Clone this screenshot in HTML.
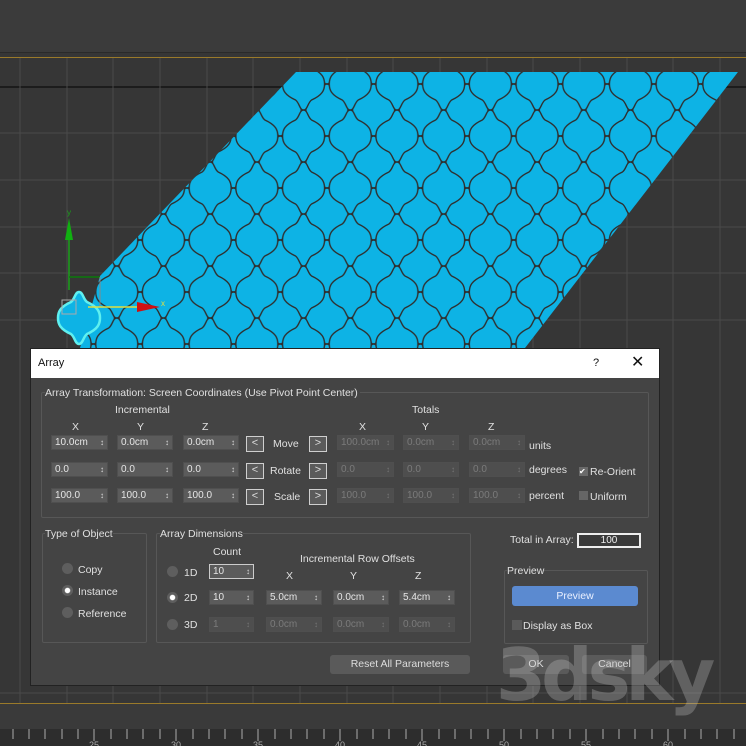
<!DOCTYPE html><html><head><style>
*{margin:0;padding:0;box-sizing:border-box}
body{width:746px;height:746px;overflow:hidden;background:#363636;font-family:"Liberation Sans",sans-serif;position:relative;color:#ddd;font-size:10.5px}
.a{position:absolute}
.sp{position:absolute;height:15px;background:#5b5b5b;border:1px solid #4f4f4f;color:#e6e6e6;font-size:10px;line-height:13px;padding-left:3px}
.sp:after{content:"\2195";position:absolute;right:3px;top:0;font-size:8px;color:#ddd}
.sp.d{background:#4e4e4e;color:#7b7b7b}
.sp.d:after{color:#777}
.bt{position:absolute;width:18px;height:16px;border:1px solid #cfcfcf;background:#5b5b5b;color:#ddd;text-align:center;font-size:11px;line-height:13px}
.grp{position:absolute;border:1px solid #575757;border-radius:2px}
.lbl{position:absolute;font-size:10.5px;color:#e0e0e0;white-space:nowrap}
.rad{position:absolute;width:11px;height:11px;border-radius:50%;background:#5e5e5e}
.pb{position:absolute;background:#5a5a5a;border-radius:3px;text-align:center;color:#ddd;font-size:10.5px}
</style></head><body>
<div class="a" style="left:0;top:0;width:746px;height:52px;background:#3b3b3b"></div>
<div class="a" style="left:0;top:52px;width:746px;height:1px;background:#2a2a2a"></div>
<div class="a" style="left:0;top:57px;width:746px;height:1px;background:#9a7a2a"></div>
<div class="a" style="left:0;top:86px;width:746px;height:2px;background:#1c1c1c"></div>
<svg class="a" style="left:0;top:0" width="746" height="746">
<g stroke="#4a4a4a" stroke-width="1">
<line x1="20" y1="58" x2="20" y2="703"/><line x1="67" y1="58" x2="67" y2="703"/><line x1="113" y1="58" x2="113" y2="703"/><line x1="160" y1="58" x2="160" y2="703"/><line x1="207" y1="58" x2="207" y2="703"/><line x1="253" y1="58" x2="253" y2="703"/><line x1="300" y1="58" x2="300" y2="703"/><line x1="347" y1="58" x2="347" y2="703"/><line x1="393" y1="58" x2="393" y2="703"/><line x1="440" y1="58" x2="440" y2="703"/><line x1="487" y1="58" x2="487" y2="703"/><line x1="533" y1="58" x2="533" y2="703"/><line x1="580" y1="58" x2="580" y2="703"/><line x1="627" y1="58" x2="627" y2="703"/><line x1="673" y1="58" x2="673" y2="703"/><line x1="720" y1="58" x2="720" y2="703"/>
<line x1="0" y1="133" x2="746" y2="133"/><line x1="0" y1="180" x2="746" y2="180"/><line x1="0" y1="227" x2="746" y2="227"/><line x1="0" y1="273" x2="746" y2="273"/><line x1="0" y1="320" x2="746" y2="320"/><line x1="0" y1="693" x2="746" y2="693"/>
</g>
<defs>
<path id="t" d="M0,-26 C4,-26 4,-19 8,-16 C19,-11 21,-6 21,0 C21,6 19,11 8,16 C4,19 4,26 0,26 C-4,26 -4,19 -8,16 C-19,11 -21,6 -21,0 C-21,-6 -19,-11 -8,-16 C-4,-19 -4,-26 0,-26Z"/>
<pattern id="p" x="0" y="0" width="46.7" height="52" patternUnits="userSpaceOnUse">
<use href="#t" x="0" y="0" fill="#0db3e5" stroke="#2f2f2f" stroke-width="1.4"/>
<use href="#t" x="46.7" y="0" fill="#0db3e5" stroke="#2f2f2f" stroke-width="1.4"/>
<use href="#t" x="0" y="52" fill="#0db3e5" stroke="#2f2f2f" stroke-width="1.4"/>
<use href="#t" x="46.7" y="52" fill="#0db3e5" stroke="#2f2f2f" stroke-width="1.4"/>
<use href="#t" x="23.35" y="26" fill="#0db3e5" stroke="#2f2f2f" stroke-width="1.4"/>
</pattern>
<clipPath id="c"><polygon points="80,342 525,342 738,66 296,66 100,270"/></clipPath>
</defs>
<rect x="0" y="0" width="746" height="346" fill="url(#p)" clip-path="url(#c)" transform="translate(0,6)"/>
<use href="#t" x="79" y="318" fill="#0db3e5" stroke="#5ff0f0" stroke-width="2.5"/>
<rect x="62" y="300" width="14" height="14" fill="none" stroke="#aaa"/>
<line x1="69" y1="240" x2="69" y2="290" stroke="#1aa01a" stroke-width="1.5"/>
<polygon points="69,218 65,240 73,240" fill="#10b010"/>
<line x1="69" y1="277" x2="100" y2="277" stroke="#0a7a0a" stroke-width="1.5"/>
<line x1="100" y1="277" x2="100" y2="307" stroke="#888" stroke-width="1"/>
<line x1="88" y1="307" x2="137" y2="307" stroke="#e0e040" stroke-width="1.5"/>
<polygon points="160,307 137,302 137,312" fill="#d01010"/>
<text x="67" y="215" fill="#1aa01a" font-size="8" font-family="Liberation Sans">y</text>
<text x="161" y="306" fill="#e0e040" font-size="8" font-family="Liberation Sans">x</text>
</svg>
<!-- bottom -->
<div class="a" style="left:0;top:703px;width:746px;height:1px;background:#9a7a2a"></div>
<div class="a" style="left:0;top:704px;width:746px;height:25px;background:#3a3a3a"></div>
<div class="a" style="left:0;top:729px;width:746px;height:17px;background:#2d2d2d"></div>
<svg class="a" style="left:0;top:729px" width="746" height="17"><g stroke="#aaa">
<line x1="13" y1="0" x2="13" y2="10"/><line x1="29" y1="0" x2="29" y2="10"/><line x1="45" y1="0" x2="45" y2="10"/><line x1="62" y1="0" x2="62" y2="10"/><line x1="78" y1="0" x2="78" y2="10"/><line x1="94" y1="0" x2="94" y2="12"/><line x1="111" y1="0" x2="111" y2="10"/><line x1="127" y1="0" x2="127" y2="10"/><line x1="143" y1="0" x2="143" y2="10"/><line x1="160" y1="0" x2="160" y2="10"/><line x1="176" y1="0" x2="176" y2="12"/><line x1="193" y1="0" x2="193" y2="10"/><line x1="209" y1="0" x2="209" y2="10"/><line x1="225" y1="0" x2="225" y2="10"/><line x1="242" y1="0" x2="242" y2="10"/><line x1="258" y1="0" x2="258" y2="12"/><line x1="275" y1="0" x2="275" y2="10"/><line x1="291" y1="0" x2="291" y2="10"/><line x1="307" y1="0" x2="307" y2="10"/><line x1="324" y1="0" x2="324" y2="10"/><line x1="340" y1="0" x2="340" y2="12"/><line x1="357" y1="0" x2="357" y2="10"/><line x1="373" y1="0" x2="373" y2="10"/><line x1="389" y1="0" x2="389" y2="10"/><line x1="406" y1="0" x2="406" y2="10"/><line x1="422" y1="0" x2="422" y2="12"/><line x1="439" y1="0" x2="439" y2="10"/><line x1="455" y1="0" x2="455" y2="10"/><line x1="471" y1="0" x2="471" y2="10"/><line x1="488" y1="0" x2="488" y2="10"/><line x1="504" y1="0" x2="504" y2="12"/><line x1="521" y1="0" x2="521" y2="10"/><line x1="537" y1="0" x2="537" y2="10"/><line x1="553" y1="0" x2="553" y2="10"/><line x1="570" y1="0" x2="570" y2="10"/><line x1="586" y1="0" x2="586" y2="12"/><line x1="603" y1="0" x2="603" y2="10"/><line x1="619" y1="0" x2="619" y2="10"/><line x1="635" y1="0" x2="635" y2="10"/><line x1="652" y1="0" x2="652" y2="10"/><line x1="668" y1="0" x2="668" y2="12"/><line x1="685" y1="0" x2="685" y2="10"/><line x1="701" y1="0" x2="701" y2="10"/><line x1="717" y1="0" x2="717" y2="10"/><line x1="734" y1="0" x2="734" y2="10"/></g>
<g fill="#aaa" font-size="9" font-family="Liberation Sans"><text x="89" y="19">25</text><text x="171" y="19">30</text><text x="253" y="19">35</text><text x="335" y="19">40</text><text x="417" y="19">45</text><text x="499" y="19">50</text><text x="581" y="19">55</text><text x="663" y="19">60</text></g></svg>
<!-- dialog -->
<div class="a" style="left:30px;top:348px;width:630px;height:338px;background:#444;border:1px solid #222"></div>
<div class="a" style="left:31px;top:349px;width:628px;height:29px;background:#fff;color:#111;font-size:11px;line-height:29px;padding-left:7px">Array<span class="a" style="left:562px;top:0">?</span><span class="a" style="left:600px;top:-1px;font-size:16px">✕</span></div>
<div class="grp" style="left:41px;top:392px;width:608px;height:126px"></div>
<div class="lbl" style="left:45px;top:387px;background:#444;padding-right:2px">Array Transformation: Screen Coordinates (Use Pivot Point Center)</div>
<div class="lbl" style="left:115px;top:404px">Incremental</div>
<div class="lbl" style="left:412px;top:404px">Totals</div>
<div class="lbl" style="left:72px;top:421px">X</div><div class="lbl" style="left:137px;top:421px">Y</div><div class="lbl" style="left:202px;top:421px">Z</div>
<div class="lbl" style="left:359px;top:421px">X</div><div class="lbl" style="left:422px;top:421px">Y</div><div class="lbl" style="left:488px;top:421px">Z</div>
<div class="sp" style="left:51px;top:435px;width:57px">10.0cm</div><div class="sp" style="left:117px;top:435px;width:56px">0.0cm</div><div class="sp" style="left:183px;top:435px;width:56px">0.0cm</div>
<div class="sp" style="left:51px;top:462px;width:57px">0.0</div><div class="sp" style="left:117px;top:462px;width:56px">0.0</div><div class="sp" style="left:183px;top:462px;width:56px">0.0</div>
<div class="sp" style="left:51px;top:488px;width:57px">100.0</div><div class="sp" style="left:117px;top:488px;width:56px">100.0</div><div class="sp" style="left:183px;top:488px;width:56px">100.0</div>
<div class="bt" style="left:246px;top:436px">&lt;</div><div class="bt" style="left:246px;top:463px">&lt;</div><div class="bt" style="left:246px;top:489px">&lt;</div>
<div class="bt" style="left:309px;top:436px">&gt;</div><div class="bt" style="left:309px;top:463px">&gt;</div><div class="bt" style="left:309px;top:489px">&gt;</div>
<div class="lbl" style="left:273px;top:438px">Move</div><div class="lbl" style="left:270px;top:465px">Rotate</div><div class="lbl" style="left:274px;top:491px">Scale</div>
<div class="sp d" style="left:337px;top:435px;width:57px">100.0cm</div><div class="sp d" style="left:403px;top:435px;width:56px">0.0cm</div><div class="sp d" style="left:469px;top:435px;width:56px">0.0cm</div>
<div class="sp d" style="left:337px;top:462px;width:57px">0.0</div><div class="sp d" style="left:403px;top:462px;width:56px">0.0</div><div class="sp d" style="left:469px;top:462px;width:56px">0.0</div>
<div class="sp d" style="left:337px;top:488px;width:57px">100.0</div><div class="sp d" style="left:403px;top:488px;width:56px">100.0</div><div class="sp d" style="left:469px;top:488px;width:56px">100.0</div>
<div class="lbl" style="left:529px;top:440px">units</div><div class="lbl" style="left:529px;top:464px">degrees</div><div class="lbl" style="left:529px;top:490px">percent</div>
<div class="a" style="left:579px;top:467px;width:9px;height:9px;background:#6a6a6a;color:#fff;font-size:8px;line-height:9px">✔</div><div class="lbl" style="left:590px;top:466px">Re-Orient</div>
<div class="a" style="left:579px;top:491px;width:9px;height:9px;background:#666"></div><div class="lbl" style="left:590px;top:491px">Uniform</div>
<div class="grp" style="left:42px;top:533px;width:105px;height:110px"></div>
<div class="lbl" style="left:45px;top:528px;background:#444">Type of Object</div>
<div class="rad" style="left:62px;top:563px"></div><div class="lbl" style="left:78px;top:564px">Copy</div>
<div class="rad" style="left:62px;top:585px;background:radial-gradient(#fff 30%,#5e5e5e 40%)"></div><div class="lbl" style="left:78px;top:586px">Instance</div>
<div class="rad" style="left:62px;top:607px"></div><div class="lbl" style="left:78px;top:608px">Reference</div>
<div class="grp" style="left:156px;top:533px;width:315px;height:110px"></div>
<div class="lbl" style="left:160px;top:528px;background:#444">Array Dimensions</div>
<div class="lbl" style="left:213px;top:546px">Count</div>
<div class="lbl" style="left:300px;top:553px">Incremental Row Offsets</div>
<div class="lbl" style="left:286px;top:570px">X</div><div class="lbl" style="left:350px;top:570px">Y</div><div class="lbl" style="left:415px;top:570px">Z</div>
<div class="rad" style="left:167px;top:566px"></div><div class="lbl" style="left:184px;top:567px">1D</div>
<div class="rad" style="left:167px;top:592px;background:radial-gradient(#fff 30%,#5e5e5e 40%)"></div><div class="lbl" style="left:184px;top:592px">2D</div>
<div class="rad" style="left:167px;top:619px"></div><div class="lbl" style="left:184px;top:619px">3D</div>
<div class="sp" style="left:209px;top:564px;width:45px;border-color:#ccc">10</div>
<div class="sp" style="left:209px;top:590px;width:45px">10</div>
<div class="sp d" style="left:209px;top:617px;width:45px">1</div>
<div class="sp" style="left:266px;top:590px;width:56px">5.0cm</div><div class="sp" style="left:333px;top:590px;width:56px">0.0cm</div><div class="sp" style="left:399px;top:590px;width:56px">5.4cm</div>
<div class="sp d" style="left:266px;top:617px;width:56px">0.0cm</div><div class="sp d" style="left:333px;top:617px;width:56px">0.0cm</div><div class="sp d" style="left:399px;top:617px;width:56px">0.0cm</div>
<div class="lbl" style="left:510px;top:534px">Total in Array:</div>
<div class="a" style="left:577px;top:533px;width:64px;height:15px;border:2px solid #eee;background:#3a3a3a;color:#eee;font-size:10px;text-align:center;line-height:12px">100</div>
<div class="grp" style="left:504px;top:570px;width:144px;height:74px"></div>
<div class="lbl" style="left:507px;top:565px;background:#444">Preview</div>
<div class="a" style="left:512px;top:586px;width:126px;height:20px;background:#5b8ad0;border-radius:3px;color:#eaf0ff;text-align:center;line-height:20px">Preview</div>
<div class="a" style="left:512px;top:620px;width:10px;height:10px;background:#5a5a5a"></div><div class="lbl" style="left:523px;top:620px">Display as Box</div>
<div class="pb" style="left:330px;top:655px;width:140px;height:19px;line-height:19px">Reset All Parameters</div>
<div class="pb" style="left:503px;top:655px;width:66px;height:19px;line-height:19px">OK</div>
<div class="pb" style="left:582px;top:655px;width:65px;height:19px;line-height:19px">Cancel</div>
<div class="a" style="left:496px;top:630px;font-size:72px;font-weight:bold;letter-spacing:-5px;color:rgba(200,200,200,0.3);font-family:'DejaVu Sans',sans-serif;line-height:90px">3dsky</div>
</body></html>
